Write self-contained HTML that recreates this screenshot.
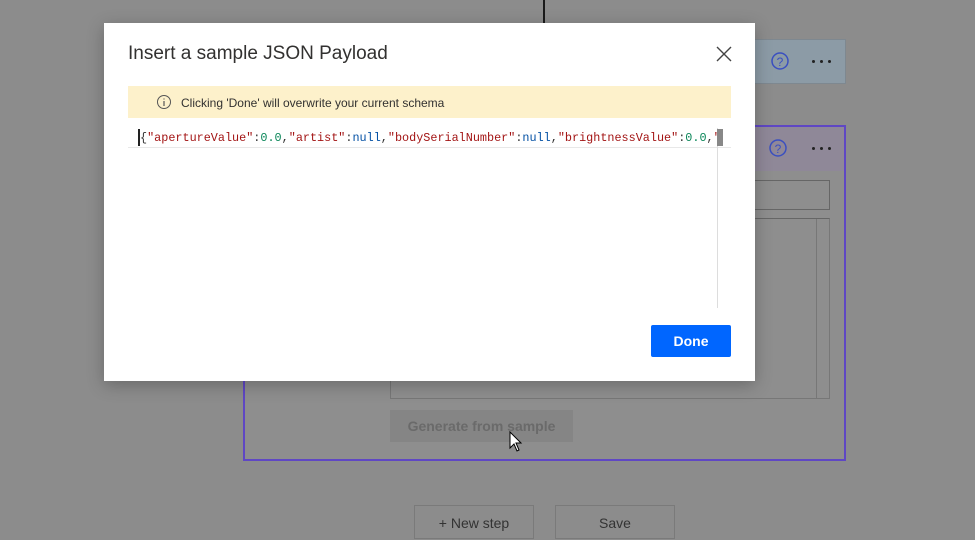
<!DOCTYPE html>
<html><head><style>
body{margin:0;width:975px;height:535px;background:#8c8c8c;position:relative;overflow:hidden;font-family:"Liberation Sans",sans-serif}
.a{position:absolute;box-sizing:border-box}
.d{position:absolute;width:3px;height:3px;border-radius:50%;background:#222}
</style></head><body>
<div class="a" style="left:543px;top:0;width:2px;height:25px;background:#1a1a1a"></div>
<div class="a" style="left:243px;top:39px;width:603px;height:45px;background:#8c9ba6;border:1px solid #7e8890"></div>
<svg class="a" style="left:770px;top:51px" width="20" height="20"><circle cx="10" cy="10" r="8" fill="none" stroke="#3a4fc0" stroke-width="1.5"/><text x="10" y="15" font-size="12" text-anchor="middle" fill="#3a4fc0" font-family="Liberation Sans">?</text></svg>
<div class="d" style="left:812px;top:60px"></div><div class="d" style="left:820px;top:60px"></div><div class="d" style="left:828px;top:60px"></div>
<div class="a" style="left:243px;top:125px;width:603px;height:336px;border:2px solid #5f47c4;background:#8e8e8e"></div>
<div class="a" style="left:245px;top:127px;width:599px;height:44px;background:#8f8898"></div>
<svg class="a" style="left:768px;top:138px" width="20" height="20"><circle cx="10" cy="10" r="8" fill="none" stroke="#3a4fc0" stroke-width="1.5"/><text x="10" y="15" font-size="12" text-anchor="middle" fill="#3a4fc0" font-family="Liberation Sans">?</text></svg>
<div class="d" style="left:812px;top:147px"></div><div class="d" style="left:820px;top:147px"></div><div class="d" style="left:828px;top:147px"></div>
<div class="a" style="left:390px;top:180px;width:440px;height:30px;border:1px solid #666"></div>
<div class="a" style="left:390px;top:218px;width:440px;height:181px;border:1px solid #777;border-top-color:#666"></div>
<div class="a" style="left:816px;top:219px;width:1px;height:180px;background:#777"></div>
<div class="a" style="left:390px;top:410px;width:183px;height:32px;background:#858585;color:#6a6a6a;font-size:14px;font-weight:bold;text-align:center;line-height:32px">Generate from sample</div>
<div class="a" style="left:414px;top:505px;width:120px;height:34px;border:1px solid #7a7a7a;color:#333;font-size:14px;text-align:center;line-height:34px">+ New step</div>
<div class="a" style="left:555px;top:505px;width:120px;height:34px;border:1px solid #7a7a7a;color:#333;font-size:14px;text-align:center;line-height:34px">Save</div>
<svg class="a" style="left:509px;top:431px" width="14" height="22"><path d="M1 1 L1 17 L5 13 L8 20 L10 19 L7 12 L12 12 Z" fill="#fff" stroke="#000" stroke-width="1"/></svg>

<div class="a" style="left:104px;top:23px;width:651px;height:358px;background:#fff;box-shadow:0 4px 16px rgba(0,0,0,.25)"></div>
<div class="a" style="left:128px;top:43px;font-size:19px;color:#323130">Insert a sample JSON Payload</div>
<svg class="a" style="left:716px;top:46px" width="16" height="16"><path d="M1 1L15 15M15 1L1 15" stroke="#444" stroke-width="1.4"/></svg>
<div class="a" style="left:128px;top:86px;width:603px;height:32px;background:#fdf1cb"></div>
<svg class="a" style="left:156px;top:94px" width="16" height="16"><circle cx="8" cy="8" r="6.5" fill="none" stroke="#555" stroke-width="1"/><path d="M8 7v5M8 4.5v1" stroke="#555" stroke-width="1.2"/></svg>
<div class="a" style="left:181px;top:96px;font-size:12px;color:#323130">Clicking 'Done' will overwrite your current schema</div>
<div class="a" style="left:128px;top:127px;width:603px;height:21px;border-bottom:1px solid #e8e8e8"></div>
<div class="a" style="left:717px;top:128px;width:1px;height:180px;background:#ddd"></div>
<div class="a" style="left:138px;top:129px;width:2px;height:17px;background:#222"></div>
<div class="a" style="left:140px;top:130px;width:583px;overflow:hidden;white-space:nowrap;font-family:'Liberation Mono',monospace;font-size:11.8px;line-height:16px;color:#333">{<span style="color:#a31515">"apertureValue"</span>:<span style="color:#098658">0.0</span>,<span style="color:#a31515">"artist"</span>:<span style="color:#0451a5">null</span>,<span style="color:#a31515">"bodySerialNumber"</span>:<span style="color:#0451a5">null</span>,<span style="color:#a31515">"brightnessValue"</span>:<span style="color:#098658">0.0</span>,<span style="color:#a31515">"c</span></div>
<div class="a" style="left:717px;top:129px;width:6px;height:17px;background:#888"></div>
<div class="a" style="left:651px;top:325px;width:80px;height:32px;background:#0066ff;color:#fff;font-size:14px;font-weight:bold;text-align:center;line-height:32px;border-radius:2px">Done</div>
</body></html>
